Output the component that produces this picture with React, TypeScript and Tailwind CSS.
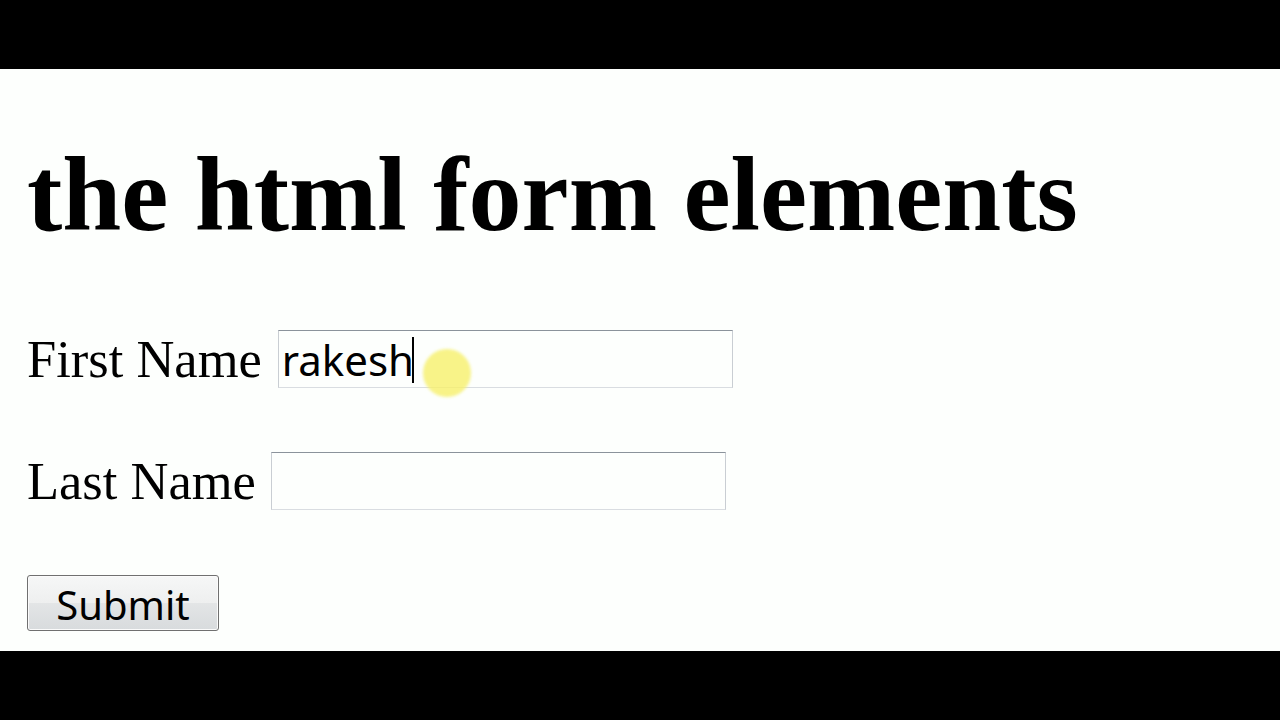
const TextBox = ({ value, caret, className }: { value?: string; caret?: boolean; className?: string }) => (
  <div
    className={
      "flex h-[58px] w-[455px] items-center border border-t-[#8b939b] border-x-[#c9ced3] border-b-[#d9dde1] bg-[#fdfffd] pl-[3px] font-['Noto_Sans',sans-serif] text-[42px] leading-[56px] text-black " +
      (className || "")
    }
  >
    {value && <span className="pt-[2px]">{value}</span>}
    {caret && <span className="-ml-[2px] mt-[2px] h-[46px] w-[2px] bg-black" />}
  </div>
);

export default function App() {
  return (
    <div className="flex h-[720px] w-[1280px] flex-col overflow-hidden bg-black">
      <div className="h-[69px] shrink-0" />
      <div className="relative h-[582px] shrink-0 bg-[#fdfffd] px-[27px] pt-[65px]">
        <h1 className="font-['Liberation_Serif',serif] text-[106px] font-bold leading-[122px] text-black">
          the html form elements
        </h1>

        <form className="mt-[74px] flex flex-col">
          <div className="flex h-[58px] items-center gap-[16px]">
            <label className="font-['Liberation_Serif',serif] text-[52.5px] leading-[58px] text-black">First Name</label>
            <TextBox value="rakesh" caret />
          </div>

          <div className="mt-[64px] flex h-[58px] items-center gap-[15px]">
            <label className="font-['Liberation_Serif',serif] text-[52.5px] leading-[58px] text-black">Last Name</label>
            <TextBox />
          </div>

          <div className="mt-[65px]">
            <button
              type="button"
              className="h-[56px] w-[192px] rounded-[3px] border border-[#707070] bg-[linear-gradient(to_bottom,#f6f7f7_0%,#eeefef_50%,#e3e5e6_50%,#d8dbdd_100%)] pt-[3px] font-['Noto_Sans',sans-serif] text-[40px] leading-[50px] text-black shadow-[inset_0_0_0_1px_#fbfbfb]"
            >
              Submit
            </button>
          </div>
        </form>

        {/* cursor highlight */}
        <div className="pointer-events-none absolute left-[423px] top-[280px] h-[48px] w-[48px] rounded-full bg-[#f6f06a]/80 blur-[1.5px]" />
      </div>
      <div className="flex-1" />
    </div>
  );
}
